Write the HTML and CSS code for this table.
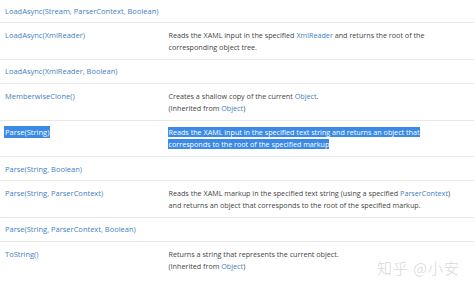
FILE: index.html
```html
<!DOCTYPE html>
<html lang="en">
<head>
    <meta charset="UTF-8">
    <meta name="viewport" content="width=device-width, initial-scale=1.0">
    <title>XamlReader Methods</title>
    <link rel="stylesheet" href="styles.css">
</head>
<body>
    <div class="methods">
        <table>
            <tbody>
                <tr>
                    <td class="name"><a href="#">LoadAsync(Stream, ParserContext, Boolean)</a></td>
                    <td class="desc"></td>
                </tr>
                <tr>
                    <td class="name"><a href="#">LoadAsync(XmlReader)</a></td>
                    <td class="desc">Reads the XAML input in the specified <a href="#">XmlReader</a> and returns the root of the corresponding object tree.</td>
                </tr>
                <tr>
                    <td class="name"><a href="#">LoadAsync(XmlReader, Boolean)</a></td>
                    <td class="desc"></td>
                </tr>
                <tr>
                    <td class="name"><a href="#">MemberwiseClone()</a></td>
                    <td class="desc">Creates a shallow copy of the current <a href="#">Object</a>.<br>(Inherited from <a href="#">Object</a>)</td>
                </tr>
                <tr>
                    <td class="name"><span class="sel">Parse(String)</span></td>
                    <td class="desc"><span class="sel">Reads the XAML input in the specified text string and returns an object that corresponds to the root of the specified markup</span></td>
                </tr>
                <tr>
                    <td class="name"><a href="#">Parse(String, Boolean)</a></td>
                    <td class="desc"></td>
                </tr>
                <tr>
                    <td class="name"><a href="#">Parse(String, ParserContext)</a></td>
                    <td class="desc">Reads the XAML markup in the specified text string (using a specified <a href="#">ParserContext</a>) and returns an object that corresponds to the root of the specified markup.</td>
                </tr>
                <tr>
                    <td class="name"><a href="#">Parse(String, ParserContext, Boolean)</a></td>
                    <td class="desc"></td>
                </tr>
                <tr>
                    <td class="name"><a href="#">ToString()</a></td>
                    <td class="desc">Returns a string that represents the current object.<br>(Inherited from <a href="#">Object</a>)</td>
                </tr>
            </tbody>
        </table>
        <div class="mark">知乎 @小安</div>
    </div>
</body>
</html>
```

FILE: styles.css
```css
body {
    margin: 0;
    padding: 0;
    background-color: #ffffff;
    font-family: "Open Sans", "Noto Sans", sans-serif;
    font-size: 7.2px;
    color: #454545;
}
.methods {
    position: relative;
    height: 289px;
    overflow: hidden;
}
table {
    width: 100%;
    margin-top: -1px;
    border-collapse: collapse;
}
td {
    padding: 5.6px 5px 5.5px 5px;
    line-height: 12.2px;
    vertical-align: top;
    text-align: left;
    border-bottom: 1px solid #e8e8e8;
}
td.name {
    width: 153px;
    font-size: 7.5px;
    white-space: nowrap;
}
td.desc {
    padding-right: 20px;
}
tr:last-child td {
    border-bottom: none;
}
a {
    color: #3f7fc0;
    text-decoration: none;
}
.sel {
    background-color: #3a8ae6;
    color: #ffffff;
}
.name .sel {
    margin-left: -1px;
    padding: 1px 1px;
}
.mark {
    position: absolute;
    right: 14px;
    bottom: 14px;
    font-family: "Noto Sans CJK SC", sans-serif;
    font-size: 15px;
    font-weight: 300;
    line-height: 1;
    color: #d8d8d8;
    letter-spacing: 1px;
}
```
